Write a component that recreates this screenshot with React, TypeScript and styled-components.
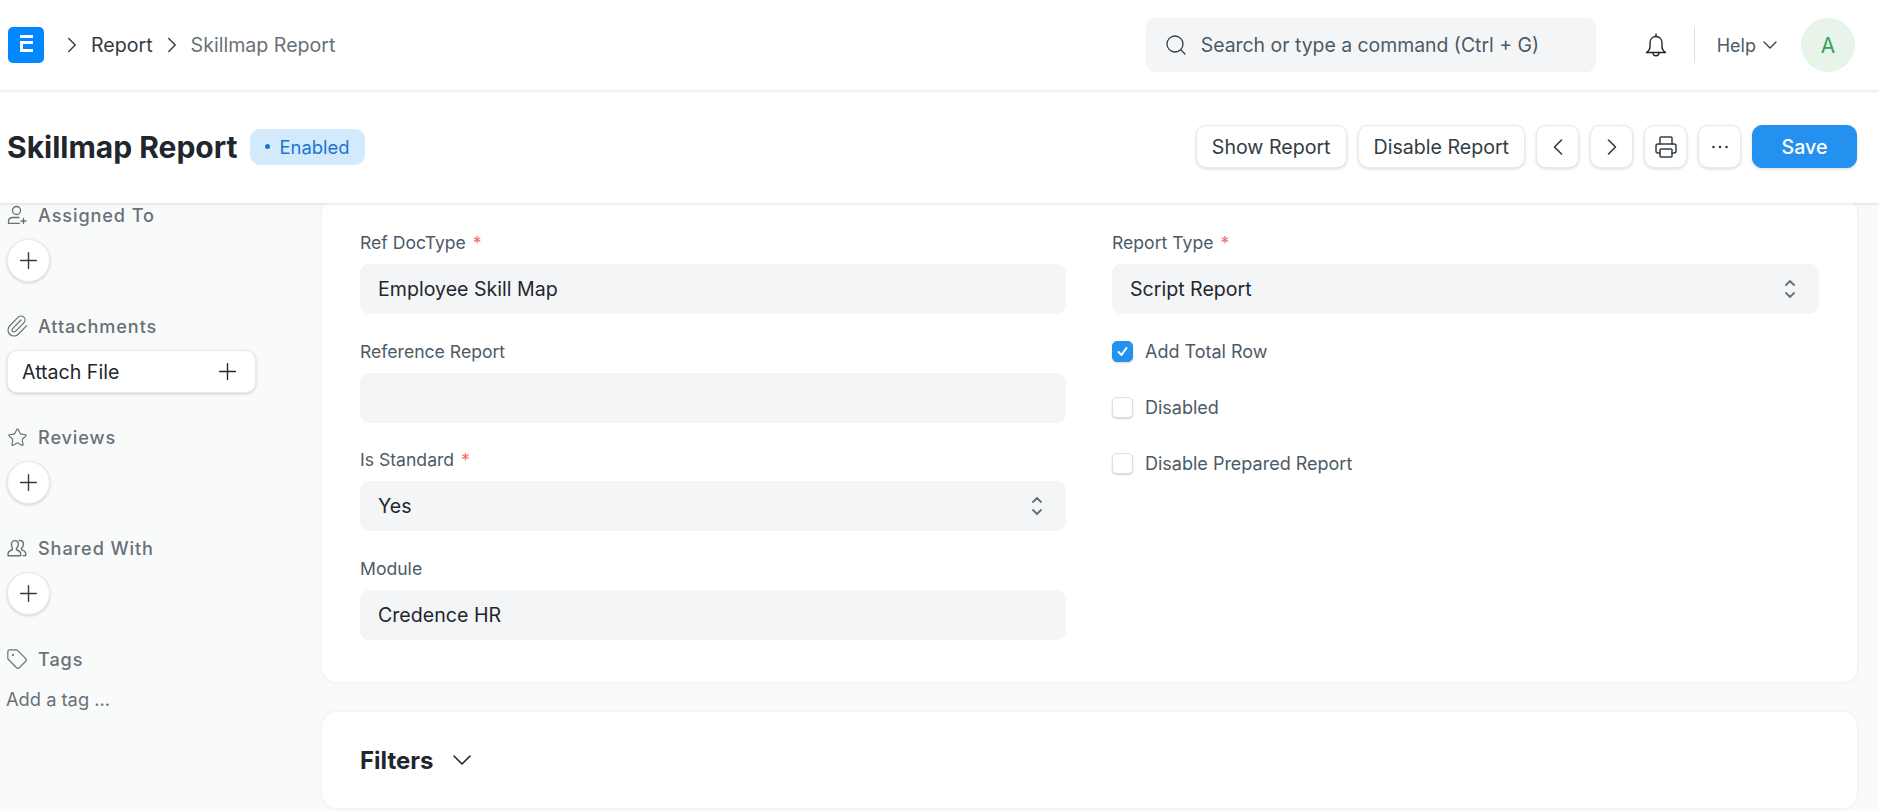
import styled, { createGlobalStyle } from 'styled-components'
import { ChevronDown, ChevronLeft, ChevronRight, Paperclip, Plus, Printer, Search, Star, Tag } from 'lucide-react'

const GlobalStyle = createGlobalStyle`
  html, body {
    margin: 0;
    height: 100%;
    overflow: hidden;
    background: #f9fafa;
    font-family: Inter, "Noto Sans", sans-serif;
    color: #1f272e;
  }
  * { box-sizing: border-box; }
`

const Navbar = styled.header`
  position: relative;
  z-index: 3;
  height: 90px;
  display: flex;
  align-items: center;
  padding: 0 24px 0 8px;
  background: #fff;
  box-shadow: 0 1px 3px rgba(25, 39, 52, 0.14);
`

const Logo = styled.svg`
  width: 36px;
  height: 36px;
  margin-right: 15px;
`

const Crumb = styled.span<{ $muted?: boolean }>`
  font-size: 19.6px;
  color: ${p => (p.$muted ? '#687178' : '#333c44')};
  margin: 0 6px;
`

const SearchBox = styled.div`
  width: 450px;
  height: 54px;
  margin-left: auto;
  padding: 0 18px;
  display: flex;
  align-items: center;
  gap: 13px;
  border-radius: 9px;
  background: #f4f5f6;
  font-size: 19.4px;
  color: #4c5a67;
`

const BellBox = styled.div`
  margin-left: 48px;
  padding-right: 26px;
  height: 36px;
  display: flex;
  align-items: center;
  border-right: 1px solid #dcdfe2;
`

const HelpBox = styled.div`
  margin-left: 22px;
  display: flex;
  align-items: center;
  gap: 2px;
  font-size: 18px;
  color: #4c5a67;
`

const Avatar = styled.div`
  width: 54px;
  height: 54px;
  margin-left: 19px;
  display: flex;
  align-items: center;
  justify-content: center;
  border-radius: 50%;
  background: #e8f3ea;
  color: #36a25a;
  font-size: 21px;
`

const PageHead = styled.div`
  position: relative;
  z-index: 2;
  height: 113px;
  padding: 0 22px 0 7px;
  display: flex;
  align-items: center;
  background: #fff;
  box-shadow: 0 1px 3px rgba(25, 39, 52, 0.14);
`

const Title = styled.h1`
  margin: 0;
  font-size: 30px;
  font-weight: 700;
  color: #1f272e;
`

const Badge = styled.span`
  margin-left: 12px;
  height: 36px;
  padding: 0 15px;
  display: flex;
  align-items: center;
  gap: 10px;
  border-radius: 10px;
  background: #d3e9fc;
  color: #1c76d0;
  font-size: 18.4px;
  &::before {
    content: '';
    width: 5px;
    height: 5px;
    border-radius: 50%;
    background: #1c76d0;
  }
`

const Actions = styled.div`
  margin-left: auto;
  display: flex;
  gap: 11px;
`

const ActionButton = styled.button<{ $primary?: boolean; $square?: boolean }>`
  height: 43px;
  width: ${p => (p.$square ? '43px' : 'auto')};
  min-width: ${p => (p.$primary ? '105px' : '0')};
  padding: ${p => (p.$square ? '0' : '0 15px')};
  display: flex;
  align-items: center;
  justify-content: center;
  border: 1px solid ${p => (p.$primary ? '#2490ef' : '#e8eaec')};
  border-radius: 10px;
  background: ${p => (p.$primary ? '#2490ef' : '#fff')};
  box-shadow: 0 1px 3px rgba(25, 39, 52, 0.18);
  color: ${p => (p.$primary ? '#fff' : '#333c44')};
  font-family: inherit;
  font-size: 19.6px;
  font-weight: ${p => (p.$primary ? 500 : 400)};
`

const Body = styled.div`
  display: grid;
  grid-template-columns: 322px 1535px;
  margin-top: -5px;
`

const Sidebar = styled.aside`
  padding: 5px 0 0 7px;
  display: flex;
  flex-direction: column;
  gap: 32px;
`

const SideSection = styled.section`
  display: flex;
  flex-direction: column;
  gap: 12px;
`

const SideLabel = styled.div`
  height: 24px;
  display: flex;
  align-items: center;
  gap: 11px;
  font-size: 18.1px;
  font-weight: 500;
  letter-spacing: 0.05em;
  color: #687178;
`

const IconSlot = styled.span`
  width: 20px;
  height: 20px;
  flex: none;
  display: flex;
  align-items: center;
  justify-content: center;
  svg { flex: none; }
`

const RoundButton = styled.button`
  width: 43px;
  height: 43px;
  padding: 0;
  display: flex;
  align-items: center;
  justify-content: center;
  border: 1px solid #e8eaec;
  border-radius: 50%;
  background: #fff;
  box-shadow: 0 1px 3px rgba(25, 39, 52, 0.2);
  color: #333c44;
`

const AttachButton = styled.button`
  width: 249px;
  height: 43px;
  padding: 0 14px;
  display: flex;
  align-items: center;
  justify-content: space-between;
  border: 1px solid #e8eaec;
  border-radius: 10px;
  background: #fff;
  box-shadow: 0 1px 3px rgba(25, 39, 52, 0.2);
  color: #1f272e;
  font-family: inherit;
  font-size: 19.6px;
`

const TagHint = styled.div`
  font-size: 18.3px;
  color: #687178;
  margin: 5px 0 0 -1px;
`

const Main = styled.main`
  display: flex;
  flex-direction: column;
  gap: 30px;
`

const Card = styled.section`
  background: #fff;
  border-radius: 14px;
  box-shadow: 0 0 3px rgba(25, 39, 52, 0.1);
`

const FormCard = styled(Card)`
  height: 484px;
  padding: 33px 38px 0;
  display: grid;
  grid-template-columns: 706px 707px;
  column-gap: 46px;
  align-content: start;
`

const Column = styled.div`
  display: flex;
  flex-direction: column;
`

const Field = styled.div`
  margin-bottom: 25.5px;
`

const FieldLabel = styled.label`
  display: block;
  height: 24px;
  margin-bottom: 9px;
  font-size: 17.6px;
  line-height: 24px;
  color: #4c5a67;
`

const Req = styled.span`
  color: #f56b6b;
  margin-left: 2px;
`

const Input = styled.div`
  height: 50px;
  padding: 0 18px;
  display: flex;
  align-items: center;
  justify-content: space-between;
  border-radius: 9px;
  background: #f4f5f6;
  font-size: 19.6px;
  color: #1f272e;
  svg { color: #687178; margin-right: 5px; }
`

const CheckRow = styled.div`
  height: 21px;
  margin-bottom: 35px;
  display: flex;
  align-items: center;
  gap: 12px;
  font-size: 18px;
  color: #4c5a67;
`

const CheckList = styled.div`
  margin-top: 1.5px;
`

const Box = styled.span<{ $on?: boolean }>`
  width: 21px;
  height: 21px;
  display: flex;
  align-items: center;
  justify-content: center;
  border: 1px solid ${p => (p.$on ? '#2490ef' : '#dcdfe2')};
  border-radius: 5px;
  background: ${p => (p.$on ? '#2490ef' : '#fff')};
  box-shadow: 0 1px 2px rgba(25, 39, 52, 0.2);
`

const FiltersCard = styled(Card)`
  height: 96px;
  padding: 0 38px;
  display: flex;
  align-items: center;
  gap: 12px;
`

const FiltersTitle = styled.h2`
  margin: 0;
  font-size: 24px;
  font-weight: 700;
  color: #1f272e;
`

const UpDown = () => (
  <svg width="12" height="22" viewBox="0 0 12 22" fill="none" stroke="currentColor" strokeWidth="1.8" strokeLinecap="round" strokeLinejoin="round">
    <path d="M2 7l4-4 4 4" />
    <path d="M2 15l4 4 4-4" />
  </svg>
)

const AssignIcon = () => (
  <svg width="20" height="20" viewBox="0 0 20 20" fill="none" stroke="#687178" strokeWidth="1.3" strokeLinecap="round">
    <circle cx="9.5" cy="5.5" r="4" />
    <path d="M1.5 18v-1.5c0-2.4 2-4 4.5-4h6" />
    <path d="M1.5 18.300h11" />
    <path d="M16.500 13.500v5M14 16h5" />
  </svg>
)

const SharedIcon = () => (
  <svg width="21" height="21" viewBox="0 0 20 20" fill="none" stroke="#687178" strokeWidth="1.3" strokeLinejoin="round">
    <path d="M7.500 2.500c2 0 3.300 1.500 3.300 3.500 0 1.700-.8 3-1.800 3.800v1.400c2 .7 4 1.700 4 3.700v2H1v-2c0-2 2-3 4-3.700V9.800C5 9 4.200 7.700 4.200 6c0-2 1.300-3.500 3.300-3.500z" />
    <path d="M11 2.600c.4-.2.800-.2 1.300-.2 2 0 3.300 1.500 3.300 3.500 0 1.700-.8 3-1.800 3.800v1.400c2 .7 4 1.700 4 3.700v2h-3" />
  </svg>
)

const BellIcon = () => (
  <svg width="24" height="26" viewBox="0 0 24 26" fill="none" stroke="#1f272e" strokeWidth="1.4" strokeLinejoin="round" strokeLinecap="round">
    <path d="M12 4.500V2" />
    <path d="M12 4.500c-3.700 0-6 2.900-6 6.500v4c0 2-1.100 3.800-3.600 5.500h19.200c-2.500-1.700-3.600-3.500-3.600-5.500v-4c0-3.600-2.300-6.500-6-6.500z" />
    <path d="M9 20.500c0 2 1.300 3.300 3 3.300s3-1.300 3-3.300" />
  </svg>
)

const DotsIcon = () => (
  <svg width="18" height="6" viewBox="0 0 18 6" fill="#333c44">
    <circle cx="2.500" cy="3" r="1.300" />
    <circle cx="9" cy="3" r="1.300" />
    <circle cx="15.500" cy="3" r="1.300" />
  </svg>
)

const AddIcon = () => <Plus size={27} strokeWidth={1.25} />

const App = () => {
  return (
    <>
      <GlobalStyle />
      <Navbar>
        <Logo viewBox="0 0 36 36">
          <rect width="36" height="36" rx="5" fill="#0089ff" />
          <path fill="#fff" d="M12 8h13v3H12zM12 14h13v3h-10v5h10v3H12z" />
        </Logo>
        <ChevronRight size={26} color="#333c44" strokeWidth={1.3} />
        <Crumb>Report</Crumb>
        <ChevronRight size={26} color="#333c44" strokeWidth={1.3} />
        <Crumb $muted>Skillmap Report</Crumb>
        <SearchBox>
          <Search size={24} color="#333c44" strokeWidth={1.3} />
          Search or type a command (Ctrl + G)
        </SearchBox>
        <BellBox>
          <BellIcon />
        </BellBox>
        <HelpBox>
          Help
          <ChevronDown size={24} color="#333c44" strokeWidth={1.3} />
        </HelpBox>
        <Avatar>A</Avatar>
      </Navbar>
      <PageHead>
        <Title>Skillmap Report</Title>
        <Badge>Enabled</Badge>
        <Actions>
          <ActionButton>Show Report</ActionButton>
          <ActionButton>Disable Report</ActionButton>
          <ActionButton $square><ChevronLeft size={28} strokeWidth={1.4} /></ActionButton>
          <ActionButton $square><ChevronRight size={28} strokeWidth={1.4} /></ActionButton>
          <ActionButton $square><Printer size={24} strokeWidth={1.5} /></ActionButton>
          <ActionButton $square><DotsIcon /></ActionButton>
          <ActionButton $primary>Save</ActionButton>
        </Actions>
      </PageHead>
      <Body>
        <Sidebar>
          <SideSection>
            <SideLabel><IconSlot><AssignIcon /></IconSlot>Assigned To</SideLabel>
            <RoundButton><AddIcon /></RoundButton>
          </SideSection>
          <SideSection>
            <SideLabel><IconSlot><Paperclip size={24} strokeWidth={1.2} color="#687178" /></IconSlot>Attachments</SideLabel>
            <AttachButton>Attach File<AddIcon /></AttachButton>
          </SideSection>
          <SideSection>
            <SideLabel><IconSlot><Star size={21} strokeWidth={1.3} color="#687178" /></IconSlot>Reviews</SideLabel>
            <RoundButton><AddIcon /></RoundButton>
          </SideSection>
          <SideSection>
            <SideLabel><IconSlot><SharedIcon /></IconSlot>Shared With</SideLabel>
            <RoundButton><AddIcon /></RoundButton>
          </SideSection>
          <SideSection>
            <SideLabel><IconSlot><Tag size={22} strokeWidth={1.3} color="#687178" /></IconSlot>Tags</SideLabel>
            <TagHint>Add a tag ...</TagHint>
          </SideSection>
        </Sidebar>
        <Main>
          <FormCard>
            <Column>
              <Field>
                <FieldLabel>Ref DocType <Req>*</Req></FieldLabel>
                <Input>Employee Skill Map</Input>
              </Field>
              <Field>
                <FieldLabel>Reference Report</FieldLabel>
                <Input />
              </Field>
              <Field>
                <FieldLabel>Is Standard <Req>*</Req></FieldLabel>
                <Input>Yes<UpDown /></Input>
              </Field>
              <Field>
                <FieldLabel>Module</FieldLabel>
                <Input>Credence HR</Input>
              </Field>
            </Column>
            <Column>
              <Field>
                <FieldLabel>Report Type <Req>*</Req></FieldLabel>
                <Input>Script Report<UpDown /></Input>
              </Field>
              <CheckList>
                <CheckRow>
                  <Box $on>
                    <svg width="13" height="13" viewBox="0 0 13 13" fill="none" stroke="#fff" strokeWidth="2" strokeLinecap="round" strokeLinejoin="round">
                      <path d="M2.500 7l3 3 5-7" />
                    </svg>
                  </Box>
                  Add Total Row
                </CheckRow>
                <CheckRow><Box />Disabled</CheckRow>
                <CheckRow><Box />Disable Prepared Report</CheckRow>
              </CheckList>
            </Column>
          </FormCard>
          <FiltersCard>
            <FiltersTitle>Filters</FiltersTitle>
            <ChevronDown size={32} color="#1f272e" strokeWidth={1.2} />
          </FiltersCard>
        </Main>
      </Body>
    </>
  )
}

export default App
